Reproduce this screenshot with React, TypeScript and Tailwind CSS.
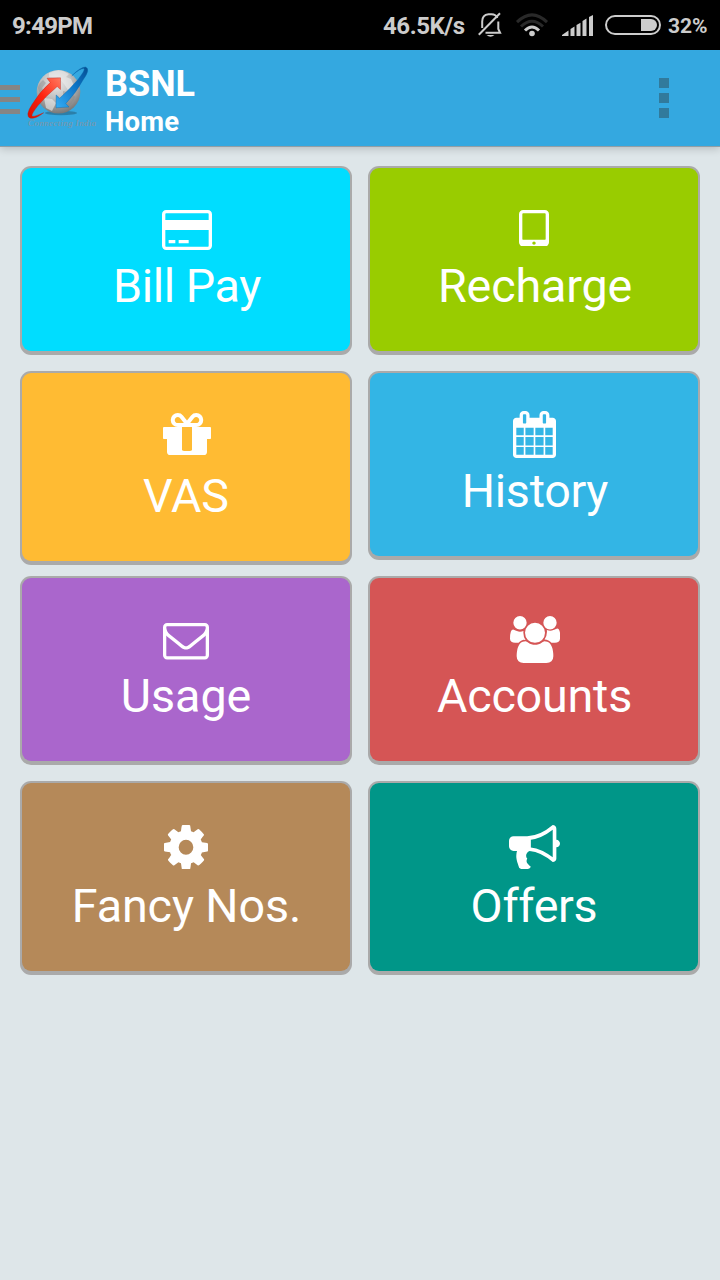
type IconProps = { viewBox: string; className: string; d: string };

function Icon({ viewBox, className, d }: IconProps) {
  return (
    <svg viewBox={viewBox} preserveAspectRatio="none" fill="currentColor" className={`shrink-0 ${className}`} aria-hidden="true">
      <path d={d} />
    </svg>
  );
}

type Tile = { label: string; color: string; tall?: boolean; labelClass: string; icon: IconProps };

const tiles: Tile[] = [
  {
    label: "Bill Pay",
    color: "bg-[#00ddff]",
    labelClass: "pl-[2px] tracking-[-0.4px]",
    icon: {
      viewBox: "0 128 1920 1536",
      className: "w-[50px] h-[40px] mt-[41.5px] ml-[2px]",
      d: "M1760 128q66 0 113 47t47 113v1216q0 66-47 113t-113 47h-1600q-66 0-113-47t-47-113v-1216q0-66 47-113t113-47h1600zm-1600 128q-13 0-22.5 9.5t-9.5 22.5v224h1664v-224q0-13-9.5-22.5t-22.5-9.5h-1600zm1600 1280q13 0 22.5-9.5t9.5-22.5v-608h-1664v608q0 13 9.5 22.5t22.5 9.5h1600zm-1504-128v-128h256v128h-256zm384 0v-128h384v128h-384z",
    },
  },
  {
    label: "Recharge",
    color: "bg-[#99cc00]",
    labelClass: "pl-[2px] tracking-[-0.15px]",
    icon: {
      viewBox: "0 128 1152 1408",
      className: "w-[30px] h-[36.5px] mt-[41.5px]",
      d: "M640 1408q0-26-19-45t-45-19-45 19-19 45 19 45 45 19 45-19 19-45zm384-160v-960q0-13-9.5-22.5t-22.5-9.5h-832q-13 0-22.5 9.5t-9.5 22.5v960q0 13 9.5 22.5t22.5 9.5h832q13 0 22.5-9.5t9.5-22.5zm128-960v1088q0 66-47 113t-113 47h-832q-66 0-113-47t-47-113v-1088q0-66 47-113t113-47h832q66 0 113 47t47 113z",
    },
  },
  {
    label: "VAS",
    color: "bg-[#ffbb33]",
    tall: true,
    labelClass: "",
    icon: {
      viewBox: "0 192 1536 1344",
      className: "w-[48px] h-[42px] mt-[40px] ml-[2px]",
      d: "M928 1356v-716h-320v716q0 25 18 38.5t46 13.5h192q28 0 46-13.5t18-38.5zm-456-844h195l-126-161q-26-31-69-31-40 0-68 28t-28 68 28 68 68 28zm688-96q0-40-28-68t-68-28q-43 0-69 31l-125 161h194q40 0 68-28t28-68zm376 256v320q0 14-9 23t-23 9h-96v416q0 40-28 68t-68 28h-1088q-40 0-68-28t-28-68v-416h-96q-14 0-23-9t-9-23v-320q0-14 9-23t23-9h440q-93 0-158.5-65.5t-65.5-158.5 65.5-158.5 158.5-65.5q107 0 168 77l128 165 128-165q61-77 168-77 93 0 158.5 65.5t65.5 158.5-65.5 158.5-158.5 65.5h440q14 0 23 9t9 23z",
    },
  },
  {
    label: "History",
    color: "bg-[#33b5e5]",
    labelClass: "pl-[2px] tracking-[-0.3px]",
    icon: {
      viewBox: "0 0 1664 1792",
      className: "w-[43px] h-[47px] mt-[38px] ml-[1px]",
      d: "M128 1664h288v-288h-288v288zm352 0h320v-288h-320v288zm-352-352h288v-320h-288v320zm352 0h320v-320h-320v320zm-352-384h288v-288h-288v288zm736 736h320v-288h-320v288zm-384-736h320v-288h-320v288zm768 736h288v-288h-288v288zm-384-352h320v-320h-320v320zm-352-864v-288q0-13-9.5-22.5t-22.5-9.5h-64q-13 0-22.5 9.5t-9.5 22.5v288q0 13 9.5 22.5t22.5 9.5h64q13 0 22.5-9.5t9.5-22.5zm736 864h288v-320h-288v320zm-384-384h320v-288h-320v288zm384 0h288v-288h-288v288zm32-480v-288q0-13-9.5-22.5t-22.5-9.5h-64q-13 0-22.5 9.5t-9.5 22.5v288q0 13 9.5 22.5t22.5 9.5h64q13 0 22.5-9.5t9.5-22.5zm384-64v1280q0 52-38 90t-90 38h-1408q-52 0-90-38t-38-90v-1280q0-52 38-90t90-38h128v-96q0-66 47-113t113-47h64q66 0 113 47t47 113v96h384v-96q0-66 47-113t113-47h64q66 0 113 47t47 113v96h128q52 0 90 38t38 90z",
    },
  },
  {
    label: "Usage",
    color: "bg-[#aa66cc]",
    labelClass: "",
    icon: {
      viewBox: "0 256 1792 1408",
      className: "w-[46px] h-[36.5px] mt-[45px]",
      d: "M1664 1504v-768q-32 36-69 66-268 206-426 338-51 43-83 67t-86.5 48.5-102.5 24.5h-2q-48 0-102.5-24.5t-86.5-48.5-83-67q-158-132-426-338-37-30-69-66v768q0 13 9.5 22.5t22.5 9.5h1472q13 0 22.5-9.5t9.5-22.5zm0-1051v-24.5l-.5-13-3-12.5-5.5-9-9-7.5-14-2.5h-1472q-13 0-22.5 9.5t-9.5 22.5q0 168 147 284 193 152 401 317 6 5 35 29.5t46 37.5 44.5 31.5 50.5 27.5 43 9h2q20 0 43-9t50.5-27.5 44.5-31.5 46-37.5 35-29.5q208-165 401-317 54-43 100.5-115.5t46.5-131.5zm128-37v1088q0 66-47 113t-113 47h-1472q-66 0-113-47t-47-113v-1088q0-66 47-113t113-47h1472q66 0 113 47t47 113z",
    },
  },
  {
    label: "Accounts",
    color: "bg-[#d55555]",
    labelClass: "pl-[1px] tracking-[-0.2px]",
    icon: {
      viewBox: "0 0 1920 1792",
      className: "w-[50px] h-[47px] mt-[38px] ml-[2px]",
      d: "M593 896q-162 5-265 128h-134q-82 0-138-40.5t-56-118.5q0-353 124-353 6 0 43.5 21t97.5 42.5 119 21.5q67 0 133-23-5 37-5 66 0 159 93 293zm1071 637q0 120-73 189.5t-194 69.5h-874q-121 0-194-69.5t-73-189.5q0-53 3.5-103.5t14-109 26.5-108.5 43-97.5 62-81 85.5-53.5 111.5-20q10 0 43 21.5t73 48 107 48 135 21.5 135-21.5 107-48 73-48 43-21.5q61 0 111.5 20t85.5 53.5 62 81 43 97.5 26.5 108.5 14 109 3.5 103.5zm-1024-1277q0 106-75 181t-181 75-181-75-75-181 75-181 181-75 181 75 75 181zm704 384q0 159-112.5 271.5t-271.5 112.5-271.5-112.5-112.5-271.5 112.5-271.5 271.5-112.5 271.5 112.5 112.5 271.5zm576 225q0 78-56 118.5t-138 40.5h-134q-103-123-265-128 93-134 93-293 0-29-5-66 66 23 133 23 59 0 119-21.5t97.5-42.5 43.5-21q124 0 124 353zm-128-609q0 106-75 181t-181 75-181-75-75-181 75-181 181-75 181 75 75 181z",
    },
  },
  {
    label: "Fancy Nos.",
    color: "bg-[#b58959]",
    tall: true,
    labelClass: "pl-[1px] tracking-[-0.1px]",
    icon: {
      viewBox: "0 0 1536 1536",
      className: "w-[44px] h-[44.5px] mt-[41.5px]",
      d: "M1024 768q0-106-75-181t-181-75-181 75-75 181 75 181 181 75 181-75 75-181zm512-109v222q0 12-8 23t-20 13l-185 28q-19 54-39 91 35 50 107 138 10 12 10 25t-9 23q-27 37-99 108t-94 71q-12 0-26-9l-138-108q-44 23-91 38-16 136-29 186-7 28-36 28h-222q-14 0-24.5-8.5t-11.5-21.5l-28-184q-49-16-90-37l-141 107q-10 9-25 9-14 0-25-11-126-114-165-168-7-10-7-23 0-12 8-23 15-21 51-66.5t54-70.5q-27-50-41-99l-183-27q-13-2-21-12.5t-8-23.5v-222q0-12 8-23t19-13l186-28q14-46 39-92-40-57-107-138-10-12-10-24 0-10 9-23 26-36 98.5-107.5t94.5-71.5q13 0 26 10l138 107q44-23 91-38 16-136 29-186 7-28 36-28h222q14 0 24.5 8.5t11.5 21.5l28 184q49 16 90 37l142-107q9-9 24-9 13 0 25 10 129 119 165 170 7 8 7 22 0 12-8 23-15 21-51 66.5t-54 70.5q26 50 41 98l183 28q13 2 21 12.5t8 23.5z",
    },
  },
  {
    label: "Offers",
    color: "bg-[#009688]",
    tall: true,
    labelClass: "tracking-[-0.3px]",
    icon: {
      viewBox: "0 128 1792 1536",
      className: "w-[51px] h-[44.5px] mt-[41.5px] ml-[1px]",
      d: "M1664 640q53 0 90.5 37.5t37.5 90.5-37.5 90.5-90.5 37.5v384q0 52-38 90t-90 38q-417-347-812-380-58 19-91 66t-31 100.5 40 92.5q-20 33-23 65.5t6 58 33.5 55 48 50 61.5 50.5q-29 58-111.5 83t-168.5 11.5-132-55.5q-7-23-29.5-87.5t-32-94.5-23-89-15-101 3.5-98.5 22-110.5h-122q-66 0-113-47t-47-113v-192q0-66 47-113t113-47h480q435 0 896-384 52 0 90 38t38 90v384zm-128 604v-954q-394 302-768 343v270q377 42 768 341z",
    },
  },
];

function StatusBar() {
  return (
    <div className="flex h-[50px] items-center bg-black pl-3 pr-[13px] text-[24px] font-bold leading-none text-[#cccccc]">
      <span className="mr-auto pt-[2px] tracking-[-0.7px]">9:49PM</span>
      <span className="w-[82px] whitespace-nowrap pt-[2px] tracking-[-0.45px]">46.5K/s</span>
      <svg className="ml-[13px] h-[26px] w-[24px]" viewBox="0 0 24 26" fill="none" stroke="currentColor" strokeWidth="2">
        <path d="M4.200 16V9.500C4.200 5 7 2.500 10.500 2.200h3C16 2.300 18.500 3.700 19.300 6M20.300 9.500V17l1.800 3.800H7.500" />
        <path d="M.8 22.700 22 1.200" />
        <path d="M8.500 23h8q-4 3.500-8 0Z" fill="currentColor" stroke="none" />
      </svg>
      <svg className="ml-[13px] h-[24px] w-[34px]" viewBox="0 0 34 24" fill="none" strokeWidth="3">
        <path d="M2 9.200q15-14.500 30 0M6 13.500q11-10.500 22 0" stroke="#292929" />
        <path d="M10 17.500q7-7 14 0" stroke="#cccccc" />
        <circle cx="17" cy="20.500" r="2.800" fill="#cccccc" />
      </svg>
      <svg className="ml-[13px] mt-[1px] h-[21px] w-[32px]" viewBox="0 0 32 21" fill="currentColor">
        <path d="M0 21v-1l6.500-4.500V21ZM8.500 21v-7l4-2.500V21ZM14.500 21V10l4-2.300V21ZM20.500 21V6l4-2.500V21ZM27 21V2l4-2v21Z" />
      </svg>
      <span className="ml-[11px] flex h-5 w-[56px] items-center justify-end rounded-full border-2 border-[#cccccc] pr-[2px]">
        <span className="h-3 w-4 rounded-r-full bg-[#cccccc]" />
      </span>
      <span className="ml-[7px] w-[39px] whitespace-nowrap pt-[2px] text-[21px]">32%</span>
    </div>
  );
}

function Logo() {
  return (
    <svg className="h-[64px] w-[72px]" viewBox="0 0 72 64" aria-hidden="true">
      <defs>
        <radialGradient id="globe" cx=".45" cy=".3" r=".7">
          <stop offset="0" stopColor="#ececec" />
          <stop offset=".5" stopColor="#c0c0c0" />
          <stop offset="1" stopColor="#777777" />
        </radialGradient>
        <linearGradient id="red" x1="0" y1="1" x2="1" y2="0">
          <stop offset="0" stopColor="#d90f00" />
          <stop offset=".5" stopColor="#ff2410" />
          <stop offset="1" stopColor="#ff7a60" />
        </linearGradient>
        <linearGradient id="blue" x1="0" y1="1" x2="1" y2="0">
          <stop offset="0" stopColor="#35adf5" />
          <stop offset=".6" stopColor="#0b72c4" />
          <stop offset="1" stopColor="#064f91" />
        </linearGradient>
      </defs>
      <ellipse cx="34" cy="47" rx="16" ry="2.200" fill="#286e91" opacity=".7" />
      <circle cx="31.500" cy="25.800" r="21.800" fill="url(#globe)" />
      <path d="M22 7q8-4 14-2l6 3-3 3 5 2 4 9-2 6-5-4-4-6-6-7-9 0ZM17 32l8 1 4 4-4 8-6-3Z" fill="#ededed" opacity=".6" />
      <path d="M11 22q1-5 5-8l3 3-4 5 2 3-4 4ZM36 25l9 2 3 4q-3 8-8 10l-4-6Z" fill="#858585" opacity=".4" />
      <path d="M20 12.200 33.500 11.800V23.500L30.200 20.500Q20 29 11 39.500Q3.500 49 5.300 50.300Q8.500 50.500 16.700 46.700Q8 53.500 2.800 52Q-2 49.500 5 38.500Q13 25.500 23.200 16.500Z" fill="url(#red)" stroke="#b92218" strokeWidth=".4" />
      <path d="M29.200 29 32.700 32.200Q42 24 51 13.500Q58.500 4 57 2.600Q53.500 2 44.800 9.800Q53.500 1 58.500 1Q64 3 56 14Q49 27 38.800 37.500L42 41 29 41.800Z" fill="url(#blue)" stroke="#0765a8" strokeWidth=".4" />
      <text x="1" y="60" textLength="68" lengthAdjust="spacing" fontSize="9" fontStyle="italic" fontFamily="Liberation Serif, serif" fill="#8295a3">Connecting India</text>
    </svg>
  );
}

function ActionBar() {
  return (
    <header className="relative flex h-[97px] items-start border-b border-[#919fa6] bg-[#34a8e0] text-white shadow-[0_2px_8px_rgba(0,0,0,0.18)]">
      <div className="mt-[35px] flex w-5 flex-col gap-[7px]">
        <span className="h-[5px] bg-[#858585]" />
        <span className="h-[5px] bg-[#858585]" />
        <span className="h-[5px] bg-[#858585]" />
      </div>
      <div className="ml-[7px] mt-4">
        <Logo />
      </div>
      <div className="ml-[6px] mt-[13px] font-bold">
        <h1 className="text-[36px] leading-[42px]">BSNL</h1>
        <p className="text-[27.5px] leading-[34px] tracking-[0.15px]">Home</p>
      </div>
      <div className="ml-auto mr-[51px] mt-7 flex flex-col gap-[5px]">
        <span className="size-[10px] bg-[#317a9c]" />
        <span className="size-[10px] bg-[#317a9c]" />
        <span className="size-[10px] bg-[#317a9c]" />
      </div>
    </header>
  );
}

function TileButton({ tile }: { tile: Tile }) {
  return (
    <button
      type="button"
      className={`flex w-full flex-col rounded-[11px] bg-[#aaaaaa] px-[2px] pb-1 pt-[2px] ${tile.tall ? "h-[194px]" : "h-[189px]"}`}
    >
      <span className={`flex w-full grow flex-col items-center rounded-[9px] text-white ${tile.color}`}>
        <span className={`flex items-start justify-center ${tile.tall ? "h-[95px]" : "h-[90px]"}`}>
          <Icon {...tile.icon} />
        </span>
        <span className={`whitespace-nowrap text-[46.67px] leading-[56px] ${tile.labelClass}`}>{tile.label}</span>
      </span>
    </button>
  );
}

export default function App() {
  return (
    <div className="h-[1280px] w-[720px] overflow-hidden bg-[#dee6e9] font-['Roboto',sans-serif]">
      <StatusBar />
      <ActionBar />
      <main className="grid auto-rows-[205px] grid-cols-2 gap-x-4 px-5 pt-[19px]">
        {tiles.map((tile) => (
          <TileButton key={tile.label} tile={tile} />
        ))}
      </main>
    </div>
  );
}
